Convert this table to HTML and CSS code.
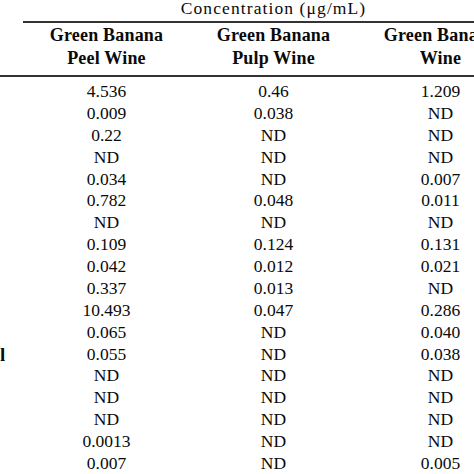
FILE: index.html
```html
<!DOCTYPE html>
<html>
<head>
<meta charset="utf-8">
<link rel="stylesheet" href="styles.css">
</head>
<body>
<div class="tbl">
  <div class="group-row">
    <div class="group">
      <div class="group-label">Concentration (μg/mL)</div>
      <div class="rule"></div>
    </div>
  </div>
  <div class="head-row">
    <div class="stub"></div>
    <div class="head">Green Banana<br>Peel Wine</div>
    <div class="head">Green Banana<br>Pulp Wine</div>
    <div class="head">Green Banana<br>Wine</div>
  </div>
  <div class="rule"></div>
  <div class="body">
    <div class="stub"></div><div>4.536</div><div>0.46</div><div>1.209</div>
    <div class="stub"></div><div>0.009</div><div>0.038</div><div>ND</div>
    <div class="stub"></div><div>0.22</div><div>ND</div><div>ND</div>
    <div class="stub"></div><div>ND</div><div>ND</div><div>ND</div>
    <div class="stub"></div><div>0.034</div><div>ND</div><div>0.007</div>
    <div class="stub"></div><div>0.782</div><div>0.048</div><div>0.011</div>
    <div class="stub"></div><div>ND</div><div>ND</div><div>ND</div>
    <div class="stub"></div><div>0.109</div><div>0.124</div><div>0.131</div>
    <div class="stub"></div><div>0.042</div><div>0.012</div><div>0.021</div>
    <div class="stub"></div><div>0.337</div><div>0.013</div><div>ND</div>
    <div class="stub"></div><div>10.493</div><div>0.047</div><div>0.286</div>
    <div class="stub"></div><div>0.065</div><div>ND</div><div>0.040</div>
    <div class="stub"><span class="stub-text">l</span></div><div>0.055</div><div>ND</div><div>0.038</div>
    <div class="stub"></div><div>ND</div><div>ND</div><div>ND</div>
    <div class="stub"></div><div>ND</div><div>ND</div><div>ND</div>
    <div class="stub"></div><div>ND</div><div>ND</div><div>ND</div>
    <div class="stub"></div><div>0.0013</div><div>ND</div><div>ND</div>
    <div class="stub"></div><div>0.007</div><div>ND</div><div>0.005</div>
  </div>
</div>
</body>
</html>
```

FILE: styles.css
```css
html, body {
  margin: 0;
  padding: 0;
  background: #ffffff;
  overflow: hidden;
  width: 474px;
  height: 474px;
}

.tbl {
  width: 524px;
  font-family: "Liberation Serif", "Times New Roman", serif;
  font-size: 17.5px;
  color: #0a0a0a;
  white-space: nowrap;
}

.rule {
  height: 0;
  border-top: 2px solid #333333;
  background-color: #333333;
}

.group-row {
  display: flex;
  padding-left: 23px;
}

.group {
  flex: 1;
}

.group-label {
  text-align: center;
  line-height: 16px;
  padding-bottom: 5px;
  letter-spacing: 1.1px;
}

.head-row {
  display: grid;
  grid-template-columns: 23px 167px 167px 167px;
  padding-top: 1px;
  padding-bottom: 5px;
}

.head {
  text-align: center;
  font-weight: bold;
  font-size: 18px;
  letter-spacing: 0.2px;
  line-height: 23px;
}

.body {
  display: grid;
  grid-template-columns: 23px 167px 167px 167px;
  grid-auto-rows: 21.88px;
  padding-top: 4px;
  line-height: 21.88px;
  text-align: center;
}

.body .stub {
  text-align: right;
  padding-right: 20px;
}

.stub-text {
  font-weight: bold;
  font-size: 19px;
}
```
